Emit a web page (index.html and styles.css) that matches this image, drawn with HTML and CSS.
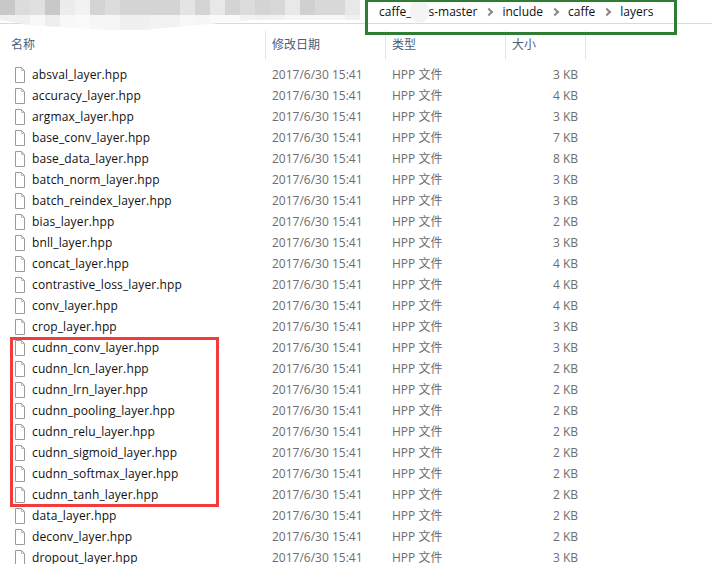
FILE: index.html
```html
<!DOCTYPE html>
<html lang="zh-CN">
<head>
  <meta charset="UTF-8">
  <title>layers</title>
  <link rel="stylesheet" href="styles.css">
</head>
<body>
  <svg class="defs" width="0" height="0">
    <symbol id="file" viewBox="0 0 12 16">
      <path d="M1.5 0.5H7.5L10.5 3.5V15.5H1.5Z" fill="#fff" stroke="#9a9a9a"/>
      <path d="M7.5 0.5V3.5H10.5" fill="none" stroke="#b8b8b8"/>
    </symbol>
  </svg>

  <div class="window">
    <div class="address-bar">
      <div class="mosaic">
        <i class="c8"></i><i class="dc"></i><i class="e0"></i><i class="c8"></i><i class="ec"></i><i class="f2"></i><i class="d4"></i><i class="dc"></i>
        <i class="d4"></i><i class="d4"></i><i class="d4"></i><i class="d4"></i><i class="e4"></i><i class="d4"></i><i class="e8"></i><i class="d4"></i>
        <i class="dc"></i><i class="d4"></i><i class="d8"></i><i class="e8"></i><i class="d0"></i><i class="d8"></i><i class="d8"></i><i class="e8"></i>
        <i class="f0"></i><i class="f0"></i><i class="f8"></i><i class="ee"></i><i class="f8"></i><i class="fa"></i><i class="f6"></i><i class="f6"></i>
        <i class="f0"></i><i class="f0"></i><i class="f2"></i><i class="f2"></i><i class="f8"></i><i class="f6"></i><i class="fa"></i><i class="fa"></i>
        <i class="f2"></i><i class="f0"></i><i class="f2"></i><i class="f6"></i><i class="f6"></i><i class="f6"></i><i class="f6"></i><i class="f0"></i>
      </div>
      <nav class="crumbs">
        <span class="crumb">caffe_<span class="hidden-part"></span>s-master</span>
        <span class="chevron"></span>
        <span class="crumb">include</span>
        <span class="chevron"></span>
        <span class="crumb">caffe</span>
        <span class="chevron"></span>
        <span class="crumb">layers</span>
      </nav>
      <div class="blob"></div>
    </div>

    <div class="list-header">
      <div class="head-cell">名称</div>
      <div class="head-cell">修改日期</div>
      <div class="head-cell">类型</div>
      <div class="head-cell">大小</div>
    </div>

    <div class="file-list">
      <div class="row"><span class="name"><svg class="icon"><use href="#file"/></svg>absval_layer.hpp</span><span>2017/6/30 15:41</span><span>HPP 文件</span><span class="size">3 KB</span></div>
      <div class="row"><span class="name"><svg class="icon"><use href="#file"/></svg>accuracy_layer.hpp</span><span>2017/6/30 15:41</span><span>HPP 文件</span><span class="size">4 KB</span></div>
      <div class="row"><span class="name"><svg class="icon"><use href="#file"/></svg>argmax_layer.hpp</span><span>2017/6/30 15:41</span><span>HPP 文件</span><span class="size">3 KB</span></div>
      <div class="row"><span class="name"><svg class="icon"><use href="#file"/></svg>base_conv_layer.hpp</span><span>2017/6/30 15:41</span><span>HPP 文件</span><span class="size">7 KB</span></div>
      <div class="row"><span class="name"><svg class="icon"><use href="#file"/></svg>base_data_layer.hpp</span><span>2017/6/30 15:41</span><span>HPP 文件</span><span class="size">8 KB</span></div>
      <div class="row"><span class="name"><svg class="icon"><use href="#file"/></svg>batch_norm_layer.hpp</span><span>2017/6/30 15:41</span><span>HPP 文件</span><span class="size">3 KB</span></div>
      <div class="row"><span class="name"><svg class="icon"><use href="#file"/></svg>batch_reindex_layer.hpp</span><span>2017/6/30 15:41</span><span>HPP 文件</span><span class="size">3 KB</span></div>
      <div class="row"><span class="name"><svg class="icon"><use href="#file"/></svg>bias_layer.hpp</span><span>2017/6/30 15:41</span><span>HPP 文件</span><span class="size">2 KB</span></div>
      <div class="row"><span class="name"><svg class="icon"><use href="#file"/></svg>bnll_layer.hpp</span><span>2017/6/30 15:41</span><span>HPP 文件</span><span class="size">3 KB</span></div>
      <div class="row"><span class="name"><svg class="icon"><use href="#file"/></svg>concat_layer.hpp</span><span>2017/6/30 15:41</span><span>HPP 文件</span><span class="size">4 KB</span></div>
      <div class="row"><span class="name"><svg class="icon"><use href="#file"/></svg>contrastive_loss_layer.hpp</span><span>2017/6/30 15:41</span><span>HPP 文件</span><span class="size">4 KB</span></div>
      <div class="row"><span class="name"><svg class="icon"><use href="#file"/></svg>conv_layer.hpp</span><span>2017/6/30 15:41</span><span>HPP 文件</span><span class="size">4 KB</span></div>
      <div class="row"><span class="name"><svg class="icon"><use href="#file"/></svg>crop_layer.hpp</span><span>2017/6/30 15:41</span><span>HPP 文件</span><span class="size">3 KB</span></div>
      <div class="row"><span class="name"><svg class="icon"><use href="#file"/></svg>cudnn_conv_layer.hpp</span><span>2017/6/30 15:41</span><span>HPP 文件</span><span class="size">3 KB</span></div>
      <div class="row"><span class="name"><svg class="icon"><use href="#file"/></svg>cudnn_lcn_layer.hpp</span><span>2017/6/30 15:41</span><span>HPP 文件</span><span class="size">2 KB</span></div>
      <div class="row"><span class="name"><svg class="icon"><use href="#file"/></svg>cudnn_lrn_layer.hpp</span><span>2017/6/30 15:41</span><span>HPP 文件</span><span class="size">2 KB</span></div>
      <div class="row"><span class="name"><svg class="icon"><use href="#file"/></svg>cudnn_pooling_layer.hpp</span><span>2017/6/30 15:41</span><span>HPP 文件</span><span class="size">2 KB</span></div>
      <div class="row"><span class="name"><svg class="icon"><use href="#file"/></svg>cudnn_relu_layer.hpp</span><span>2017/6/30 15:41</span><span>HPP 文件</span><span class="size">2 KB</span></div>
      <div class="row"><span class="name"><svg class="icon"><use href="#file"/></svg>cudnn_sigmoid_layer.hpp</span><span>2017/6/30 15:41</span><span>HPP 文件</span><span class="size">2 KB</span></div>
      <div class="row"><span class="name"><svg class="icon"><use href="#file"/></svg>cudnn_softmax_layer.hpp</span><span>2017/6/30 15:41</span><span>HPP 文件</span><span class="size">2 KB</span></div>
      <div class="row"><span class="name"><svg class="icon"><use href="#file"/></svg>cudnn_tanh_layer.hpp</span><span>2017/6/30 15:41</span><span>HPP 文件</span><span class="size">2 KB</span></div>
      <div class="row"><span class="name"><svg class="icon"><use href="#file"/></svg>data_layer.hpp</span><span>2017/6/30 15:41</span><span>HPP 文件</span><span class="size">2 KB</span></div>
      <div class="row"><span class="name"><svg class="icon"><use href="#file"/></svg>deconv_layer.hpp</span><span>2017/6/30 15:41</span><span>HPP 文件</span><span class="size">2 KB</span></div>
      <div class="row"><span class="name"><svg class="icon"><use href="#file"/></svg>dropout_layer.hpp</span><span>2017/6/30 15:41</span><span>HPP 文件</span><span class="size">3 KB</span></div>
    </div>

    <!-- hand-drawn annotations on top of the screenshot -->
    <div class="mark-green"></div>
    <div class="mark-red"></div>
  </div>
</body>
</html>
```

FILE: styles.css
```css
body {
  margin: 0;
  background-color: #fff;
  font-family: "Open Sans", "Noto Sans CJK SC", sans-serif;
  font-size: 12px;
}

.defs {
  position: absolute;
}

.window {
  position: relative;
  width: 712px;
  height: 564px;
  overflow: hidden;
}

/* address bar */
.address-bar {
  position: relative;
  height: 23px;
  border-bottom: 1px solid #d9d9d9;
  box-sizing: content-box;
}

.crumbs {
  display: flex;
  align-items: center;
  height: 23px;
  padding-left: 379px;
  color: #111;
}

.crumb {
  display: block;
  white-space: nowrap;
}

.hidden-part {
  display: inline-block;
  width: 17px;
}

.chevron {
  width: 4px;
  height: 4px;
  margin: 0 10px 0 9px;
  border-top: 2px solid #8a8a8a;
  border-right: 2px solid #8a8a8a;
  transform: rotate(45deg);
}

.blob {
  position: absolute;
  left: 410px;
  top: 0;
  width: 19px;
  height: 23px;
  border-radius: 10px;
  background-color: #f4f4f4;
}

.mosaic {
  position: absolute;
  left: 0;
  top: 0;
  width: 360px;
  height: 37px;
  display: grid;
  grid-template-columns: repeat(24, 15px);
  grid-auto-rows: 15px;
  clip-path: polygon(0 0, 100% 0, 100% 20px, 70% 20px, 40% 30px, 30% 30px, 8% 25px, 0 20px);
}

.mosaic i { display: block; }
.c8 { background-color: #c8c8c8; }
.d0 { background-color: #d0d0d0; }
.d4 { background-color: #d4d4d4; }
.d8 { background-color: #d8d8d8; }
.dc { background-color: #dcdcdc; }
.e0 { background-color: #e0e0e0; }
.e4 { background-color: #e4e4e4; }
.e8 { background-color: #e8e8e8; }
.ec { background-color: #ececec; }
.ee { background-color: #eeeeee; }
.f0 { background-color: #f0f0f0; }
.f2 { background-color: #f2f2f2; }
.f6 { background-color: #f6f6f6; }
.f8 { background-color: #f8f8f8; }
.fa { background-color: #fafafa; }

/* column headers */
.list-header {
  display: grid;
  grid-template-columns: 266px 120px 120px 80px;
  height: 27px;
  margin-top: 7px;
  color: #4c607a;
}

.head-cell {
  line-height: 28px;
  padding-left: 6px;
  border-right: 1px solid #e5e5e5;
}

.head-cell:first-child {
  padding-left: 11px;
}

/* file rows */
.file-list {
  margin-top: 6px;
}

.row {
  display: grid;
  grid-template-columns: 272px 120px 120px 66px;
  height: 21px;
  line-height: 21px;
  color: #6d6d6d;
  white-space: nowrap;
}

.name {
  display: flex;
  align-items: center;
  color: #111;
  letter-spacing: 0.13px;
}

.icon {
  width: 12px;
  height: 16px;
  margin: 0 6px 0 14px;
  flex: none;
}

.size {
  text-align: right;
}

/* annotations */
.mark-green {
  position: absolute;
  left: 365px;
  top: 0;
  width: 312px;
  height: 35px;
  box-sizing: border-box;
  border: 3px solid #2e7d32;
  border-top-width: 2px;
}

.mark-red {
  position: absolute;
  left: 10px;
  top: 337px;
  width: 209px;
  height: 170px;
  box-sizing: border-box;
  border: 3px solid #f33b3b;
}
```
